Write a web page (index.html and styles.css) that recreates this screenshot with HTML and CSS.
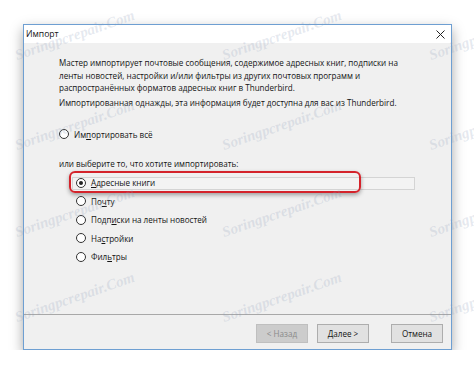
FILE: index.html
```html
<!DOCTYPE html>
<html lang="ru">
<head>
    <meta charset="UTF-8">
    <title>Импорт</title>
    <link rel="stylesheet" href="styles.css">
</head>
<body>
    <div class="window">
        <div class="titlebar">
            <span class="title">Импорт</span>
            <svg class="close" width="9" height="9" viewBox="0 0 9 9">
                <path d="M0.5 0.5 L8.5 8.5 M8.5 0.5 L0.5 8.5" stroke="#222" stroke-width="1"/>
            </svg>
        </div>
        <div class="content">
            <div class="intro">
                <p>Мастер импортирует почтовые сообщения, содержимое адресных книг, подписки на<br>ленты новостей, настройки и/или фильтры из других почтовых программ и<br>распространённых форматов адресных книг в Thunderbird.</p>
                <p class="second">Импортированная однажды, эта информация будет доступна для вас из Thunderbird.</p>
            </div>

            <label class="radio all"><span class="dot"></span>Им<u>п</u>ортировать всё</label>

            <div class="choose">или выберите то, что хотите импортировать:</div>

            <div class="options">
                <div class="option selected">
                    <span class="field"></span>
                    <span class="highlight"></span>
                    <label class="radio"><span class="dot on"></span><u>А</u>дресные книги</label>
                </div>
                <div class="option"><label class="radio"><span class="dot"></span>По<u>ч</u>ту</label></div>
                <div class="option"><label class="radio"><span class="dot"></span>Подп<u>и</u>ски на ленты новостей</label></div>
                <div class="option"><label class="radio"><span class="dot"></span>На<u>с</u>тройки</label></div>
                <div class="option"><label class="radio"><span class="dot"></span>Фил<u>ь</u>тры</label></div>
            </div>
        </div>
        <div class="footer">
            <button class="btn disabled">&lt; Назад</button>
            <button class="btn">Далее &gt;</button>
            <button class="btn cancel">Отмена</button>
        </div>
    </div>

    <!-- watermark -->
    <div class="marks">
        <span class="mark" style="left:18px;top:48px">Soringpcrepair.Com</span>
        <span class="mark" style="left:225px;top:48px">Soringpcrepair.Com</span>
        <span class="mark" style="left:432px;top:48px">Soringpcrepair.Com</span>
        <span class="mark" style="left:18px;top:138px">Soringpcrepair.Com</span>
        <span class="mark" style="left:225px;top:138px">Soringpcrepair.Com</span>
        <span class="mark" style="left:432px;top:138px">Soringpcrepair.Com</span>
        <span class="mark" style="left:18px;top:225px">Soringpcrepair.Com</span>
        <span class="mark" style="left:225px;top:225px">Soringpcrepair.Com</span>
        <span class="mark" style="left:432px;top:225px">Soringpcrepair.Com</span>
        <span class="mark" style="left:18px;top:310px">Soringpcrepair.Com</span>
        <span class="mark" style="left:225px;top:310px">Soringpcrepair.Com</span>
        <span class="mark" style="left:432px;top:310px">Soringpcrepair.Com</span>
    </div>
</body>
</html>
```

FILE: styles.css
```css
/* Import wizard */
body {
    margin: 0;
    padding: 24px 0 0 23px;
    background-color: #ffffff;
    font-family: 'Open Sans', 'Noto Sans', sans-serif;
    font-size: 8.1px;
    color: #141414;
    overflow: hidden;
}

.window {
    width: 427px;
    height: 324px;
    border: 1px solid #6e9fd2;
    background-color: #f0f0f0;
    box-shadow: 0 5px 12px rgba(0, 0, 0, 0.35);
    display: flex;
    flex-direction: column;
}

.titlebar {
    height: 18px;
    background-color: #ffffff;
    display: flex;
    justify-content: space-between;
    align-items: center;
    padding: 0 6px 0 2px;
}

.title {
    font-size: 8.6px;
}

.content {
    flex: 1;
    padding: 14px 0 0 35px;
}

.intro p {
    margin: 0;
    line-height: 12.5px;
    white-space: nowrap;
}

.intro .second {
    margin-top: 2px;
}

.radio {
    display: flex;
    align-items: center;
    height: 13px;
}

.dot {
    width: 8px;
    height: 8px;
    border: 1px solid #333;
    border-radius: 50%;
    background-color: #fff;
    margin-right: 5px;
    display: flex;
    align-items: center;
    justify-content: center;
}

.dot.on::after {
    content: "";
    width: 4px;
    height: 4px;
    border-radius: 50%;
    background-color: #222;
}

.all {
    margin: 18.5px 0 0 0;
}

.choose {
    margin-top: 16px;
    line-height: 13px;
}

.options {
    padding-left: 17px;
    margin-top: 4px;
}

.option {
    height: 18.5px;
    display: flex;
    align-items: center;
    position: relative;
}

.option .field {
    position: absolute;
    left: -4px;
    top: 3px;
    width: 341px;
    height: 11px;
    border: 1px solid #d4d4d4;
    background-color: #f3f3f3;
}

.option .highlight {
    position: absolute;
    left: -7px;
    top: -3px;
    width: 288px;
    height: 18px;
    border: 2px solid #d4232b;
    border-radius: 6px;
    box-shadow: 0 2px 4px rgba(0, 0, 0, 0.35);
}

.option .radio {
    position: relative;
}

.footer {
    border-top: 1px solid #a8a8a8;
    display: flex;
    justify-content: flex-end;
    align-items: flex-start;
    padding: 9px 8px 0 0;
    box-sizing: border-box;
    height: 35px;
    gap: 9px;
}

.btn {
    width: 52px;
    height: 19px;
    border: 1px solid #adadad;
    background-color: #e1e1e1;
    font-family: inherit;
    font-size: 8.1px;
    color: #141414;
    padding: 0;
}

.btn.disabled {
    background-color: #cccccc;
    border-color: #bfbfbf;
    color: #8a8a8a;
}

.btn.cancel {
    margin-left: 13px;
}

/* watermark */
.marks {
    position: absolute;
    inset: 0;
    pointer-events: none;
    overflow: hidden;
}

.mark {
    position: absolute;
    font-family: 'Liberation Serif', serif;
    font-style: italic;
    font-weight: bold;
    font-size: 15px;
    line-height: 15px;
    color: rgba(140, 155, 185, 0.22);
    transform: rotate(-19deg);
    transform-origin: left bottom;
    white-space: nowrap;
}
```
